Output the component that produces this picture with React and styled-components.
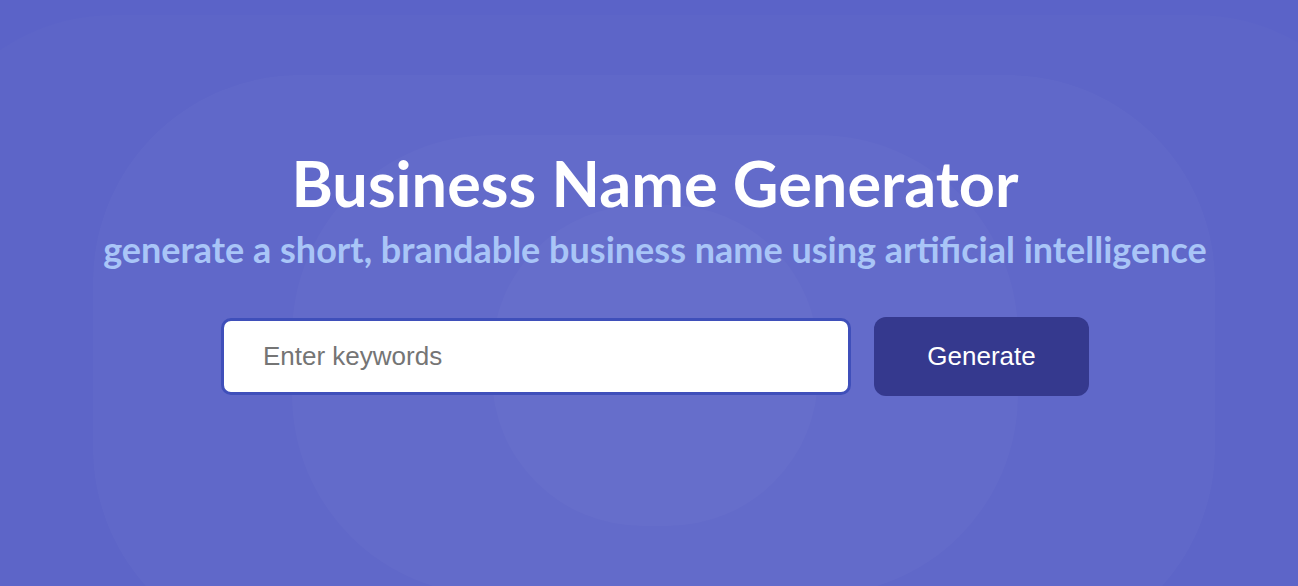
import React from "react";
import styled, { createGlobalStyle } from "styled-components";

const Global = createGlobalStyle`
  html, body { margin: 0; padding: 0; }
  body { background: #5b63c8; font-family: "Lato", "Liberation Sans", sans-serif; }
`;

const Page = styled.div`
  display: grid;
  width: 100%;
  height: 586px;
  overflow: hidden;
  background: #5b63c8;
`;

const Backdrop = styled.svg`
  grid-area: 1 / 1;
  width: 100%;
  height: 586px;
  display: block;
`;

const Content = styled.main`
  grid-area: 1 / 1;
  display: flex;
  flex-direction: column;
  align-items: center;
  padding: 146px 0 0 12px;
  z-index: 1;
`;

const Title = styled.h1`
  margin: 0;
  font-family: "Lato", sans-serif;
  font-weight: 700;
  font-size: 63px;
  line-height: 74px;
  color: #ffffff;
`;

const Subtitle = styled.p`
  margin: 7px 0 0;
  font-family: "Lato", sans-serif;
  font-weight: 700;
  font-size: 36px;
  line-height: 44px;
  color: #a9c5f7;
`;

const Form = styled.form`
  display: flex;
  align-items: center;
  gap: 23px;
  margin-top: 46px;
`;

const Input = styled.input`
  box-sizing: border-box;
  width: 630px;
  height: 77px;
  border: 3px solid #3f4fba;
  border-radius: 10px;
  background: #ffffff;
  padding: 0 0 0 39px;
  font-family: "Liberation Sans", Arial, sans-serif;
  font-size: 26px;
  color: #333;
  outline: none;
  &::placeholder { color: #757575; }
`;

const Button = styled.button`
  box-sizing: border-box;
  width: 215px;
  height: 79px;
  border: none;
  border-radius: 12px;
  background: #35398e;
  color: #ffffff;
  font-family: "Liberation Sans", Arial, sans-serif;
  font-size: 26px;
  cursor: pointer;
`;

const layers = [
  { x: -87, y: 15, w: 1484, h: 700, r: 200, o: 0.015 },
  { x: 93, y: 75, w: 1122, h: 580, r: 207, o: 0.022 },
  { x: 292, y: 135, w: 726, h: 460, r: 200, o: 0.022 },
  { x: 492, y: 205, w: 326, h: 321, r: 150, o: 0.025 },
];

export default function App() {
  return (
    <>
      <Global />
      <Page>
        <Backdrop viewBox="0 0 1298 586" preserveAspectRatio="xMidYMid slice" aria-hidden="true">
          {layers.map((l, i) => (
            <rect key={i} x={l.x} y={l.y} width={l.w} height={l.h} rx={l.r} ry={l.r} fill="#ffffff" fillOpacity={l.o} />
          ))}
        </Backdrop>
        <Content>
          <Title>Business Name Generator</Title>
          <Subtitle>generate a short, brandable business name using artificial intelligence</Subtitle>
          <Form onSubmit={(e) => e.preventDefault()}>
            <Input type="text" placeholder="Enter keywords" />
            <Button type="submit">Generate</Button>
          </Form>
        </Content>
      </Page>
    </>
  );
}
